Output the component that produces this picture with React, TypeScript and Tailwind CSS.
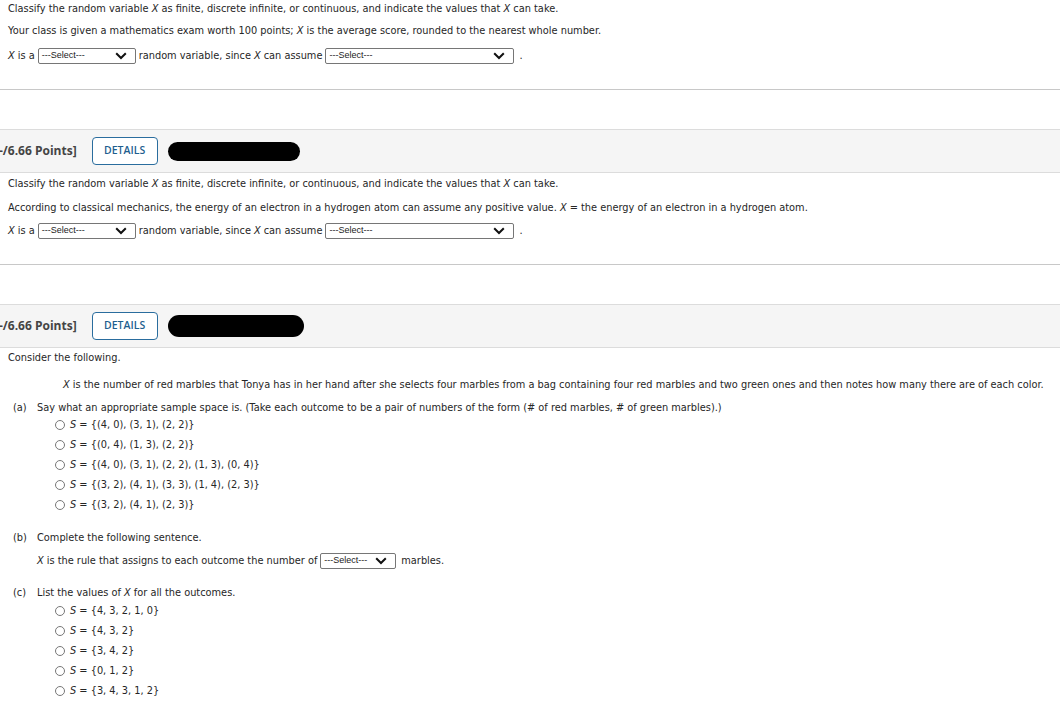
import React from 'react';

const body = "font-['DejaVu_Sans',Verdana,sans-serif] text-[9.8px] text-[#262626] whitespace-nowrap";

const X = () => <i className="font-['DejaVu_Sans',Verdana,sans-serif]">X</i>;

const Chevron = () => (
  <svg width="12" height="8" viewBox="0 0 12 8" className="shrink-0">
    <path d="M1.2 1.2 L6 6 L10.8 1.2" fill="none" stroke="#111" strokeWidth="2" />
  </svg>
);

const Select = ({ w }: { w: string }) => (
  <span
    className={`inline-flex items-center justify-between h-[16px] ${w} border border-[#767676] rounded-[2px] bg-white pl-[3px] pr-[8px] font-['Liberation_Sans',Arial,sans-serif] text-[9px] text-[#222]`}
  >
    <span>---Select---</span>
    <Chevron />
  </span>
);

const Header = ({ blob }: { blob: string }) => (
  <div className="h-[44px] border-y border-[#dcdcdc] bg-[#f5f5f5] flex items-center">
    <span className="ml-[-1px] font-['Open_Sans',sans-serif] font-bold text-[12px] text-[#444]">-/6.66 Points]</span>
    <span className="ml-[15px] h-[28px] w-[66px] border border-[#2a6d9e] rounded-[4px] flex items-center justify-center font-['Open_Sans',sans-serif] font-semibold text-[10.5px] text-[#1f5f8f] bg-white">
      DETAILS
    </span>
    <span className={`ml-[10px] bg-black rounded-full ${blob}`} />
  </div>
);

const ClassifyRow = () => (
  <div className="h-[18px] flex items-center pl-[8px] gap-[3px]">
    <X /> <span>is a</span>
    <Select w="w-[98px]" />
    <span>random variable, since</span> <X /> <span>can assume</span>
    <Select w="w-[189px]" />
    <span className="ml-[2px]">.</span>
  </div>
);

const Option = ({ text }: { text: string }) => (
  <div className="h-[20px] flex items-center pl-[55px]">
    <span className="w-[10px] h-[10px] rounded-full border border-[#777] bg-white shrink-0" />
    <span className="ml-[5px]">
      <i>S</i> = {text}
    </span>
  </div>
);

export default function App() {
  return (
    <div className={`w-[1060px] h-[705px] overflow-hidden bg-white ${body}`}>
      <div className="h-[18px] flex items-center pl-[8px]">
        <span>
          Classify the random variable <X /> as finite, discrete infinite, or continuous, and indicate the values that <X /> can take.
        </span>
      </div>
      <div className="mt-[4px] h-[18px] flex items-center pl-[8px]">
        <span>
          Your class is given a mathematics exam worth 100 points; <X /> is the average score, rounded to the nearest whole number.
        </span>
      </div>
      <div className="mt-[7px]">
        <ClassifyRow />
      </div>
      <div className="mt-[24px] border-t border-[#c8c8c8]" />

      <div className="mt-[39px]">
        <Header blob="w-[132px] h-[19px]" />
      </div>
      <div className="mt-[2px] h-[18px] flex items-center pl-[8px]">
        <span>
          Classify the random variable <X /> as finite, discrete infinite, or continuous, and indicate the values that <X /> can take.
        </span>
      </div>
      <div className="mt-[6px] h-[18px] flex items-center pl-[8px]">
        <span>
          According to classical mechanics, the energy of an electron in a hydrogen atom can assume any positive value. <X /> = the energy of an electron in a hydrogen atom.
        </span>
      </div>
      <div className="mt-[5px]">
        <ClassifyRow />
      </div>
      <div className="mt-[24px] border-t border-[#c8c8c8]" />

      <div className="mt-[39px]">
        <Header blob="w-[136px] h-[22px]" />
      </div>
      <div className="mt-[1px] h-[18px] flex items-center pl-[8px]">
        <span>Consider the following.</span>
      </div>
      <div className="mt-[9px] h-[18px] flex items-center pl-[63px]">
        <span>
          <X /> is the number of red marbles that Tonya has in her hand after she selects four marbles from a bag containing four red marbles and two green ones and then notes how many there are of each color.
        </span>
      </div>
      <div className="mt-[5px] h-[18px] flex items-center pl-[13px]">
        <span className="w-[24px]">(a)</span>
        <span>
          Say what an appropriate sample space is. (Take each outcome to be a pair of numbers of the form (# of red marbles, # of green marbles).)
        </span>
      </div>
      <div className="-mt-[2px]">
        <Option text="{(4, 0), (3, 1), (2, 2)}" />
        <Option text="{(0, 4), (1, 3), (2, 2)}" />
        <Option text="{(4, 0), (3, 1), (2, 2), (1, 3), (0, 4)}" />
        <Option text="{(3, 2), (4, 1), (3, 3), (1, 4), (2, 3)}" />
        <Option text="{(3, 2), (4, 1), (2, 3)}" />
      </div>
      <div className="mt-[14px] h-[18px] flex items-center pl-[13px]">
        <span className="w-[24px]">(b)</span>
        <span>Complete the following sentence.</span>
      </div>
      <div className="mt-[5px] h-[18px] flex items-center pl-[37px] gap-[3px]">
        <X /> <span>is the rule that assigns to each outcome the number of</span>
        <Select w="w-[76px]" />
        <span className="ml-[2px]">marbles.</span>
      </div>
      <div className="mt-[14px] h-[18px] flex items-center pl-[13px]">
        <span className="w-[24px]">(c)</span>
        <span>
          List the values of <X /> for all the outcomes.
        </span>
      </div>
      <div className="-mt-[1px]">
        <Option text="{4, 3, 2, 1, 0}" />
        <Option text="{4, 3, 2}" />
        <Option text="{3, 4, 2}" />
        <Option text="{0, 1, 2}" />
        <Option text="{3, 4, 3, 1, 2}" />
      </div>
    </div>
  );
}
